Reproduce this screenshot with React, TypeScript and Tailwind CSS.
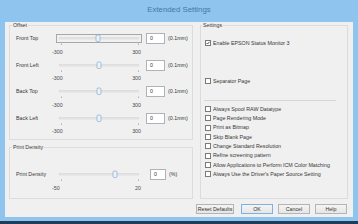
const CheckBox = ({ checked = false }: { checked?: boolean }) => {
  return (
    <span className="w-[6px] h-[6px] border border-[#7a7a7a] bg-white shrink-0 flex items-center justify-center">
      {checked && (
        <svg width="6" height="6" viewBox="0 0 6 6">
          <path d="M0.8 3.1 L2.3 4.6 L5.2 1.2" fill="none" stroke="#202020" strokeWidth="1.1" />
        </svg>
      )}
    </span>
  );
};

const Option = ({ label, checked = false }: { label: string; checked?: boolean }) => {
  return (
    <div className="flex items-center gap-[2px] h-[7px] leading-[7px] whitespace-nowrap">
      <CheckBox checked={checked} />
      <span>{label}</span>
    </div>
  );
};

const Slider = ({ thumb, focused = false }: { thumb: number; focused?: boolean }) => {
  return (
    <svg width="86" height="12" viewBox="0 0 86 12" className="mt-[1px] shrink-0">
      {focused && <rect x="0.5" y="0.5" width="85" height="8" fill="none" stroke="#a8a8a8" />}
      <rect x="3.5" y="3.5" width="79" height="1.5" fill="#e7e7e7" stroke="#d6d6d6" strokeWidth="0.6" />
      <line x1="5.5" y1="9.5" x2="5.5" y2="11" stroke="#b0b0b0" />
      <line x1="82.5" y1="9.5" x2="82.5" y2="11" stroke="#b0b0b0" />
      <rect x={thumb - 2} y="1" width="4" height="6.5" rx="1.2" fill="#eaf2fa" stroke="#93b0cd" strokeWidth="0.8" />
    </svg>
  );
};

const SliderRow = ({
  label,
  thumb,
  focused = false,
  unit,
  min,
  max,
  inputClass,
}: {
  label: string;
  thumb: number;
  focused?: boolean;
  unit: string;
  min: string;
  max: string;
  inputClass: string;
}) => {
  return (
    <div>
      <div className="flex items-start h-[12px]">
        <span className="w-[40px] leading-[11px] whitespace-nowrap">{label}</span>
        <Slider thumb={thumb} focused={focused} />
        <span className={inputClass}>0</span>
        <span className="ml-[3px] leading-[11px] whitespace-nowrap">{unit}</span>
      </div>
      <div className="mt-[3.5px] ml-[36px] w-[89px] h-[7px] leading-[7px] flex justify-between text-[#4a4a4a]">
        <span>{min}</span>
        <span>{max}</span>
      </div>
    </div>
  );
};

const Button = ({ children, width, primary = false }: { children: React.ReactNode; width: string; primary?: boolean }) => {
  return (
    <div
      className={`${width} h-[10px] leading-[8px] text-center border ${
        primary ? 'border-[#7fb0e0]' : 'border-[#b4b4b4]'
      } bg-gradient-to-b from-[#f4f4f4] to-[#e6e6e6] text-[#333]`}
    >
      {children}
    </div>
  );
};

export default function App() {
  const inputOffset = 'ml-[4px] w-[19px] h-[11px] bg-white border border-[#b0b2b8] pl-[3px] leading-[9px]';
  const inputDensity = 'ml-[8px] w-[16px] h-[11px] bg-white border border-[#b0b2b8] pl-[3px] leading-[9px]';

  return (
    <div className="w-[358px] h-[224px] flex flex-col bg-[#8ec4ee] font-['Liberation_Sans',Arial,sans-serif] text-[5.3px] text-[#363636] overflow-hidden">
      <header className="h-[22px] shrink-0 flex items-center justify-center pb-[2px]">
        <h1 className="text-[7.8px] text-[#4677aa]">Extended Settings</h1>
      </header>

      <main className="mx-[5px] h-[195px] shrink-0 bg-[#f0f0f0] flex flex-col pl-[4px] pr-[5px]">
        <div className="flex flex-row gap-[7px] h-[177px]">
          <div className="w-[184px] flex flex-col">
            <fieldset className="border border-[#dcdcdc] pl-[2px] h-[118px]">
              <legend className="px-[1px] leading-[7px]">Offset</legend>
              <div className="pl-[4px] pt-[4px] flex flex-col">
                <div className="h-[26.5px]">
                  <SliderRow label="Front Top" thumb={42} focused unit="(0.1mm)" min="-300" max="300" inputClass={inputOffset} />
                </div>
                <div className="h-[26.5px]">
                  <SliderRow label="Front Left" thumb={43} unit="(0.1mm)" min="-300" max="300" inputClass={inputOffset} />
                </div>
                <div className="h-[26.5px]">
                  <SliderRow label="Back Top" thumb={43} unit="(0.1mm)" min="-300" max="300" inputClass={inputOffset} />
                </div>
                <div className="h-[26.5px]">
                  <SliderRow label="Back Left" thumb={43} unit="(0.1mm)" min="-300" max="300" inputClass={inputOffset} />
                </div>
              </div>
            </fieldset>

            <fieldset className="mt-[3.5px] border border-[#dcdcdc] pl-[2px] flex-1">
              <legend className="px-[1px] leading-[7px]">Print Density</legend>
              <div className="pl-[4px] pt-[18.5px]">
                <SliderRow label="Print Density" thumb={59} unit="(%)" min="-50" max="20" inputClass={inputDensity} />
              </div>
            </fieldset>
          </div>

          <fieldset className="w-[148px] border border-[#dcdcdc] pl-[1px] h-full">
            <legend className="px-[1px] leading-[7px]">Settings</legend>
            <div className="pl-[3px] pt-[10.5px] flex flex-col">
              <Option label="Enable EPSON Status Monitor 3" checked />
              <div className="mt-[31px]">
                <Option label="Separator Page" />
              </div>
              <div className="mt-[15.5px] ml-[-1px] w-[132px] h-[1px] bg-[#d6d6d6]" />
              <div className="mt-[4.5px] flex flex-col gap-[2.35px]">
                <Option label="Always Spool RAW Datatype" />
                <Option label="Page Rendering Mode" />
                <Option label="Print as Bitmap" />
                <Option label="Skip Blank Page" />
                <Option label="Change Standard Resolution" />
                <Option label="Refine screening pattern" />
                <Option label="Allow Applications to Perform ICM Color Matching" />
                <Option label="Always Use the Driver's Paper Source Setting" />
              </div>
            </div>
          </fieldset>
        </div>

        <footer className="mt-[5px] flex flex-row justify-end pr-[1px]">
          <Button width="w-[38px]">Reset Defaults</Button>
          <div className="ml-[7px]">
            <Button width="w-[32px]" primary>
              OK
            </Button>
          </div>
          <div className="ml-[5px]">
            <Button width="w-[32px]">Cancel</Button>
          </div>
          <div className="ml-[5px]">
            <Button width="w-[32px]">Help</Button>
          </div>
        </footer>
      </main>

      <div className="h-[4px] shrink-0" />
      <div className="h-[3px] shrink-0 bg-[#1f3c58]" />
    </div>
  );
}
